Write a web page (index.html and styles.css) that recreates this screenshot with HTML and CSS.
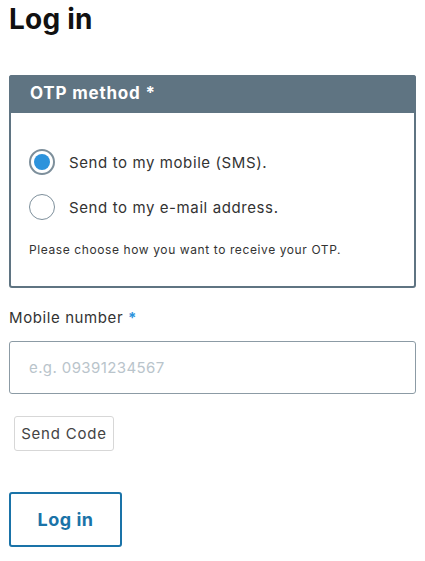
FILE: index.html
```html
<!DOCTYPE html>
<html lang="en">
<head>
<meta charset="utf-8">
<title>Log in</title>
<link rel="stylesheet" href="styles.css">
</head>
<body>
<main class="page">
  <h1 class="title">Log in</h1>
  <fieldset class="otp">
    <legend class="otp-head">OTP method *</legend>
    <div class="otp-body">
      <label class="radio-row">
        <span class="radio checked"><span class="dot"></span></span>
        <span class="radio-label">Send to my mobile (SMS).</span>
      </label>
      <label class="radio-row">
        <span class="radio"></span>
        <span class="radio-label">Send to my e-mail address.</span>
      </label>
      <p class="help">Please choose how you want to receive your OTP.</p>
    </div>
  </fieldset>
  <div class="field">
    <label class="field-label">Mobile number <span class="req">*</span></label>
    <div class="input"><span class="placeholder">e.g. 09391234567</span></div>
  </div>
  <div class="send-wrap"><button class="send-btn">Send Code</button></div>
  <button class="login-btn">Log in</button>
</main>
</body>
</html>
```
FILE: styles.css
```css
html, body { margin: 0; padding: 0; background: #fff; }
body { font-family: "Inter", "Liberation Sans", sans-serif; color: #333; }
.page { padding: 0 9px; }
.title { margin: 0; padding-top: 4px; font-size: 28px; font-weight: 700; color: #111; line-height: 30px; letter-spacing: 0.2px; }
.otp { margin: 41px 0 0; padding: 0; border: 2px solid #5f7482; border-radius: 3px; min-width: 0; position: relative; padding-top: 36px; }
.otp-head { position: absolute; top: -2px; left: -2px; right: -2px; height: 38px; box-sizing: border-box; background: #5f7482; color: #fff; font-weight: 700; font-size: 17px; padding: 0 0 0 21px; line-height: 36px; border-radius: 3px 3px 0 0; letter-spacing: 0.8px; }
.otp-body { padding: 36px 19px 29px 18px; }
.radio-row { display: flex; align-items: center; gap: 14px; height: 26px; margin-bottom: 19px; }
.radio { width: 26px; height: 26px; box-sizing: border-box; border: 1px solid #7d8f9b; border-radius: 50%; display: flex; align-items: center; justify-content: center; flex: none; }
.radio.checked { border: 2px solid #7d8f9b; }
.dot { width: 16px; height: 16px; border-radius: 50%; background: #2d93dc; }
.radio-label { font-size: 15px; color: #333; letter-spacing: 0.6px; }
.help { margin: 0; padding-top: 3px; font-size: 12px; color: #333; letter-spacing: 0.6px; }
.field { margin-top: 20px; }
.field-label { display: block; font-size: 15px; color: #333; line-height: 20px; letter-spacing: 0.6px; }
.req { color: #2d93dc; font-weight: 700; }
.input { margin-top: 13px; height: 53px; box-sizing: border-box; border: 1px solid #8c9ba5; border-radius: 3px; display: flex; align-items: center; padding-left: 19px; }
.placeholder { font-size: 15px; color: #b9c4cb; letter-spacing: 0.4px; }
.send-wrap { margin-top: 22px; padding-left: 5px; }
.send-btn { font-family: inherit; height: 35px; width: 100px; background: #fff; border: 1px solid #d7d7d7; border-radius: 3px; font-size: 15px; color: #444; padding: 0; letter-spacing: 0.8px; }
.login-btn { display: block; margin-top: 41px; width: 113px; height: 55px; background: #fff; border: 2px solid #1a73a8; border-radius: 3px; font-family: inherit; font-size: 18px; font-weight: 700; color: #1a73a8; padding: 0; letter-spacing: 0.5px; }
```
